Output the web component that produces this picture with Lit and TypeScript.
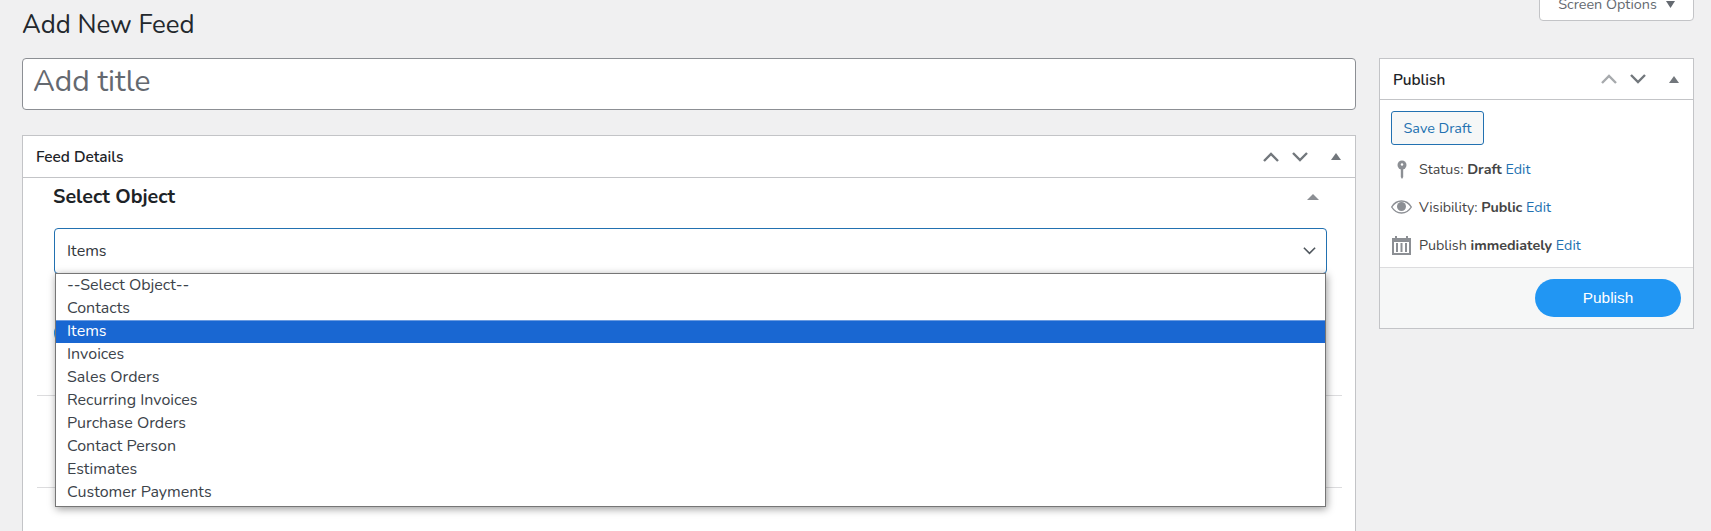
import { LitElement, html, css } from "lit";
import { customElement } from "lit/decorators.js";

const opts = ["--Select Object--","Contacts","Items","Invoices","Sales Orders","Recurring Invoices","Purchase Orders","Contact Person","Estimates","Customer Payments"];

const up = (c: string) => html`<svg class="chev" viewBox="0 0 16 10" width="16" height="10"><path d="M1 9 8 2l7 7" fill="none" stroke="${c}" stroke-width="2.400"/></svg>`;
const down = (c: string, w = 16, h = 10, sw = 2.4) => html`<svg class="chev" viewBox="0 0 16 10" width="${w}" height="${h}"><path d="M1 1 8 8l7-7" fill="none" stroke="${c}" stroke-width="${sw}"/></svg>`;
const tri = (w = 10, h = 7, c = "#72777c") => html`<svg class="tri" viewBox="0 0 10 6" width="${w}" height="${h}" preserveAspectRatio="none"><path d="M5 0 10 6H0z" fill="${c}"/></svg>`;
const ctl = (c: string) => html`<span class="ctl">${up(c)}${down("#72777c")}<span class="tri-gap">${tri()}</span></span>`;

@customElement("app-root")
export class AppRoot extends LitElement {
  static styles = css`
    :host { display: block; height: 531px; overflow: hidden; position: relative; background: #f0f0f1; font-family: "Nunito", "Lato", "Noto Sans", sans-serif; color: #444; font-size: 14.4px; }
    .wrap { display: grid; grid-template-columns: 1334px 315px; column-gap: 23px; padding: 0 0 0 22px; }
    h1 { grid-column: 1 / 3; margin: 0; font-size: 25.8px; font-weight: 400; line-height: 30px; padding-top: 10px; height: 58px; box-sizing: border-box; color: #23282d; }
    .screen { position: absolute; left: 1539px; top: -13px; width: 155px; height: 34px; box-sizing: border-box; background: #fff; border: 1px solid #c3c4c7; border-radius: 0 0 4px 4px; display: flex; align-items: center; justify-content: center; gap: 9px; color: #646970; font-size: 14.400px; }
    .title { height: 52px; box-sizing: border-box; background: #fff; border: 1px solid #8c8f94; border-radius: 4px; padding: 0 10px; font-size: 30px; line-height: 45px; color: #646970; }
    .box { background: #fff; border: 1px solid #c3c4c7; box-sizing: border-box; }
    .left { display: flex; flex-direction: column; gap: 25px; }
    .hd { display: flex; align-items: center; border-bottom: 1px solid #c3c4c7; height: 42px; box-sizing: border-box; font-size: 15.400px; font-weight: 600; color: #1d2327; padding: 0 14px 0 13px; }
    .hd .name { flex: 1; }
    .feed { height: 500px; }
    .ctl { display: flex; align-items: center; gap: 13px; }
    .tri-gap { display: flex; margin-left: 10px; }
    .body { padding: 0 28px 0 31px; }
    h2 { margin: 0 0 0 -1px; font-size: 19.700px; font-weight: 700; color: #1d2327; line-height: 24px; display: flex; justify-content: space-between; align-items: center; padding: 7px 8px 0 0; }
    .select { margin-top: 19px; height: 46px; box-sizing: border-box; background: #fff; border: 1px solid #2271b1; border-radius: 4px; padding: 0 10px 0 12px; display: flex; align-items: center; justify-content: space-between; font-size: 16px; color: #32373c; }
    .band { display: flex; height: 121px; align-items: flex-start; }
    .bluearc { width: 24px; height: 24px; border-radius: 12px 0 0 12px; background: #2196f3; margin-top: 47px; }
    .hr { border-top: 1px solid #dcdcde; margin: 0 -15px 0 -17px; }
    .band.low { height: 91px; }
    .orange { width: 2px; height: 14px; background: #f0b849; margin: 35px 0 0 1px; }
    .dropdown { position: absolute; left: 55px; top: 273px; width: 1271px; height: 234px; box-sizing: border-box; background: #fff; border: 1px solid #767676; box-shadow: 1px 2px 8px rgba(0,0,0,.4); z-index: 5; font-size: 16px; color: #3c434a; }
    .opt { height: 23px; line-height: 23px; padding-left: 11px; }
    .opt.sel { background: #1967d2; color: #fff; box-shadow: inset 0 1px #6a9be0; }
    .pub { height: 271px; }
    .pub .hd { height: 41px; padding-left: 13px; }
    .inner { padding: 11px 11px 0; }
    .draft { display: flex; align-items: center; justify-content: center; width: 93px; height: 34px; box-sizing: border-box; border: 1px solid #2271b1; border-radius: 3px; background: #f6f7f7; color: #2271b1; font-size: 14.400px; margin-bottom: 5px; }
    .row { display: flex; align-items: center; height: 38px; gap: 7px; font-size: 14.300px; }
    .row b { font-weight: 700; }
    .row a { color: #2271b1; }
    .ic { width: 21px; display: flex; justify-content: center; }
    .foot { background: #f6f7f7; border-top: 1px solid #dcdcde; height: 61px; box-sizing: border-box; margin-top: 3px; display: flex; align-items: center; justify-content: flex-end; padding: 0 12px; }
    .pubbtn { width: 146px; height: 38px; border-radius: 19px; background: #2196f3; color: #fff; display: flex; align-items: center; justify-content: center; font-family: "Liberation Sans", sans-serif; font-size: 15.400px; }
  `;
  render() {
    return html`
      <div class="wrap">
        <h1>Add New Feed</h1>
        <div class="left">
          <div class="title">Add title</div>
          <div class="box feed">
            <div class="hd"><span class="name">Feed Details</span>${ctl("#72777c")}</div>
            <div class="body">
              <h2>Select Object ${tri(12, 6, "#8c8f94")}</h2>
              <div class="select">Items ${down("#50575e", 13, 8, 2)}</div>
              <div class="band"><div class="bluearc"></div></div>
              <div class="hr"></div>
              <div class="band low"><div class="orange"></div></div>
              <div class="hr"></div>
            </div>
          </div>
        </div>
        <div class="box pub">
          <div class="hd"><span class="name">Publish</span>${ctl("#a7aaad")}</div>
          <div class="inner">
            <div class="draft">Save Draft</div>
            <div class="row"><span class="ic"><svg width="10" height="19" viewBox="0 0 10 19"><circle cx="5" cy="5" r="4.500" fill="#8c8f94"/><circle cx="5" cy="4.500" r="1.200" fill="#fff"/><path d="M3.800 8h2.400v9L5 19l-1.200-2z" fill="#8c8f94"/></svg></span><span>Status: <b>Draft</b> <a>Edit</a></span></div>
            <div class="row"><span class="ic"><svg width="21" height="14" viewBox="0 0 21 14"><path d="M.7 7C3 3.200 6.500 1 10.500 1s7.500 2.200 9.800 6c-2.300 3.800-5.800 6-9.800 6S3 10.800.7 7z" fill="none" stroke="#8c8f94" stroke-width="1.400"/><circle cx="10.500" cy="6.500" r="4.500" fill="#8c8f94"/></svg></span><span>Visibility: <b>Public</b> <a>Edit</a></span></div>
            <div class="row"><span class="ic"><svg width="19" height="19" viewBox="0 0 19 19"><path d="M0 2h3V0h2v2h9V0h2v2h3v17H0z" fill="#8c8f94"/><rect x="2" y="6" width="15" height="11" fill="#fff"/><path d="M4 7h2v9H4zM8.500 7h2v9h-2zM13 7h2v9h-2z" fill="#8c8f94"/></svg></span><span>Publish <b>immediately</b> <a>Edit</a></span></div>
          </div>
          <div class="foot"><div class="pubbtn">Publish</div></div>
        </div>
      </div>
      <div class="screen">Screen Options <svg width="9" height="7" viewBox="0 0 9 7"><path d="M0 0h9L4.500 7z" fill="#646970"/></svg></div>
      <div class="dropdown">${opts.map(o => html`<div class="opt ${o === "Items" ? "sel" : ""}">${o}</div>`)}</div>
    `;
  }
}
